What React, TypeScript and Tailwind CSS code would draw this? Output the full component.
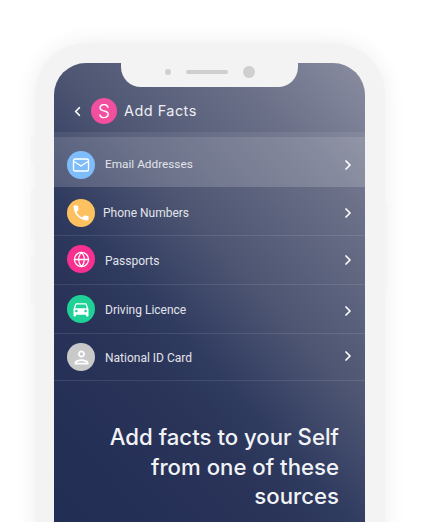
import { ChevronLeft, ChevronRight, Mail, Globe } from "lucide-react";
import { MdPhone, MdDirectionsCar, MdOutlinePerson } from "react-icons/md";

const rows = [
  { label: "Email Addresses", icon: <Mail size={18} strokeWidth={1.8} />, bg: "bg-[#7fbcfb]", h: "h-[50px] pt-[5px]", active: true, textPl: "pl-[10px]", text: "text-[11.8px]", chevron: "" },
  { label: "Phone Numbers", icon: <MdPhone size={20} />, bg: "bg-[#fdc25f]", h: "h-[49px] pt-[4px]", active: false, textPl: "pl-[8px]", text: "text-[12px]", chevron: "" },
  { label: "Passports", icon: <Globe size={17} strokeWidth={1.8} />, bg: "bg-[#f8308f]", h: "h-[49px] pb-[2px]", active: false, textPl: "pl-[10px]", text: "text-[12px] translate-y-[2px]", chevron: "translate-y-[1px]" },
  { label: "Driving Licence", icon: <MdDirectionsCar size={20} />, bg: "bg-[#1fd196]", h: "h-[49px]", active: false, textPl: "pl-[10px]", text: "text-[12px] translate-y-[1px]", chevron: "translate-y-[2px]" },
  { label: "National ID Card", icon: <MdOutlinePerson size={21} />, bg: "bg-[#c9c9c9]", h: "h-[47px]", active: false, textPl: "pl-[10px]", text: "text-[12px] translate-y-[1px]", chevron: "-translate-y-[1px]" },
];

function FactRow({ row }: { row: (typeof rows)[number] }) {
  return (
    <div className={`flex items-center ${row.h} ${row.active ? "bg-white/[0.17]" : "border-b border-white/10"}`}>
      <div className={`ml-[13px] flex h-[28px] w-[28px] shrink-0 items-center justify-center rounded-full text-white ${row.bg}`}>
        {row.icon}
      </div>
      <span className={`flex-1 font-['Roboto',sans-serif] text-[#e2e4ea] ${row.text} ${row.textPl}`}>{row.label}</span>
      <ChevronRight size={16} strokeWidth={2.6} className={`mr-[9px] text-white ${row.chevron}`} />
    </div>
  );
}

export default function App() {
  return (
    <div className="h-[522px] w-[423px] overflow-hidden bg-white pt-[43px] pl-[35px] font-['Inter',sans-serif]">
      <div className="relative h-[520px] w-[350px] rounded-t-[52px] bg-[#f3f3f3] px-[19px] pt-[20px] shadow-[0_0_22px_rgba(0,0,0,0.07)]">
        {/* side buttons */}
        <div className="absolute -left-[4px] top-[92px] h-[30px] w-[4px] bg-[#f5f5f5]" />
        <div className="absolute -left-[4px] top-[145px] h-[51px] w-[4px] bg-[#f5f5f5]" />
        <div className="absolute -left-[4px] top-[211px] h-[52px] w-[4px] bg-[#f5f5f5]" />
        <div className="absolute -right-[3px] top-[161px] h-[85px] w-[3px] bg-[#f5f5f5]" />

        <div className="relative h-[500px] w-[311px] overflow-hidden rounded-t-[32px] bg-[linear-gradient(48deg,#212c55_0%,#232e55_10%,#2a3459_35%,#303b60_44%,#4d5572_59%,#6c7189_82%,#8a8da1_100%)]">
          {/* notch */}
          <div className="absolute left-[67px] top-0 flex h-[24px] w-[177px] items-center justify-center gap-[15px] rounded-b-[20px] bg-[#f3f3f3] pb-[7px]">
            <div className="h-[6px] w-[6px] rounded-full bg-[#cfcfcf]" />
            <div className="h-[4px] w-[42px] rounded-full bg-[#cfcfcf]" />
            <div className="h-[12px] w-[12px] rounded-full bg-[#cfcfcf]" />
          </div>

          <div className="flex h-[69px] items-end pb-[8px] pl-[16px]">
            <div className="flex h-[26px] items-center">
              <ChevronLeft size={15} strokeWidth={2.8} className="text-white" />
              <div className="ml-[6px] flex h-[26px] w-[26px] items-center justify-center rounded-full bg-[#f24f9f] text-[19px] leading-none font-light text-white">S</div>
              <span className="ml-[7px] text-[14.5px] tracking-[0.45px] text-[#eceef2]">Add Facts</span>
            </div>
          </div>
          <div className="h-[5px] bg-white/[0.07]" />

          {rows.map((row) => (
            <FactRow key={row.label} row={row} />
          ))}

          <p className="mt-[41px] pr-[26px] text-right text-[22.2px] leading-[29.5px] font-[550] text-[#f2f3f6]">
            Add facts to your Self
            <br />
            from one of these
            <br />
            sources
          </p>
        </div>
      </div>
    </div>
  );
}
